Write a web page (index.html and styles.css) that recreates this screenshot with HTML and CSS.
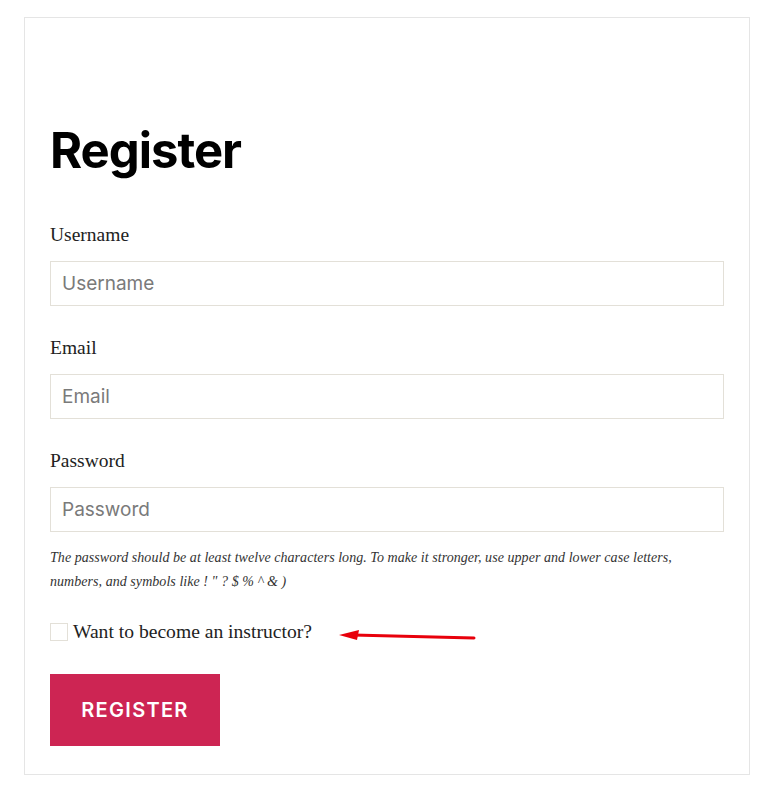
FILE: index.html
```html
<!DOCTYPE html>
<html lang="en">
<head>
    <meta charset="UTF-8">
    <meta name="viewport" content="width=device-width, initial-scale=1.0">
    <title>Register</title>
    <link rel="stylesheet" href="styles.css">
</head>
<body>
    <div class="card">
        <h1 class="title">Register</h1>
        <form class="register-form">
            <div class="field">
                <label for="username">Username</label>
                <input type="text" id="username" placeholder="Username">
            </div>
            <div class="field">
                <label for="email">Email</label>
                <input type="email" id="email" placeholder="Email">
            </div>
            <div class="field">
                <label for="password">Password</label>
                <input type="password" id="password" placeholder="Password">
                <p class="hint">The password should be at least twelve characters long. To make it stronger, use upper and lower case letters, numbers, and symbols like ! " ? $ % ^ &amp; )</p>
            </div>
            <div class="check-row">
                <input type="checkbox" id="instructor">
                <label for="instructor">Want to become an instructor?</label>
                <svg class="arrow" width="138" height="14" viewBox="0 0 138 14">
                    <line x1="14" y1="6" x2="135" y2="9" stroke="#e8000b" stroke-width="3" stroke-linecap="round"/>
                    <polygon points="0,6 20,1 18,11" fill="#e8000b"/>
                </svg>
            </div>
            <button type="button" class="btn">REGISTER</button>
        </form>
    </div>
</body>
</html>
```

FILE: styles.css
```css
body {
    margin: 0;
    padding: 17px 18px 17px 24px;
    background: #fff;
    font-family: "Liberation Serif", serif;
    color: #222;
}

.card {
    border: 1px solid #e5e5e5;
    padding: 104px 25px 26px 25px;
    height: 626px;
}

.title {
    font-family: Inter, sans-serif;
    font-weight: 700;
    font-size: 49px;
    letter-spacing: -1px;
    line-height: 58px;
    margin: 0 0 42px 0;
    color: #000;
}

.field {
    margin-bottom: 29px;
}

.field label {
    display: block;
    font-size: 19.5px;
    line-height: 26px;
    margin-bottom: 13px;
}

.field input {
    display: block;
    box-sizing: border-box;
    width: 100%;
    height: 45px;
    border: 1px solid #e3e0d8;
    padding: 0 11px;
    font-family: Inter, sans-serif;
    font-size: 19px;
    color: #333;
    outline: none;
}

.field input::placeholder {
    color: #7a7a7a;
}

.hint {
    font-style: italic;
    font-size: 14px;
    line-height: 24px;
    margin: 14px 0 0 0;
    max-width: 640px;
    color: #333;
    letter-spacing: 0.05px;
}

.check-row {
    display: flex;
    align-items: center;
    margin-top: -4px;
    margin-bottom: 29px;
}

.check-row input {
    appearance: none;
    width: 18px;
    height: 18px;
    margin: 0 5px 0 0;
    border: 1px solid #e3e0d8;
    background: #fff;
}

.check-row label {
    font-size: 19.6px;
    line-height: 26px;
}

.arrow {
    margin-left: 27px;
    margin-top: 8px;
}

.btn {
    background: #cd2553;
    color: #fff;
    border: none;
    width: 170px;
    height: 72px;
    font-family: Inter, sans-serif;
    font-weight: 600;
    font-size: 20px;
    letter-spacing: 1.3px;
    cursor: pointer;
}
```
